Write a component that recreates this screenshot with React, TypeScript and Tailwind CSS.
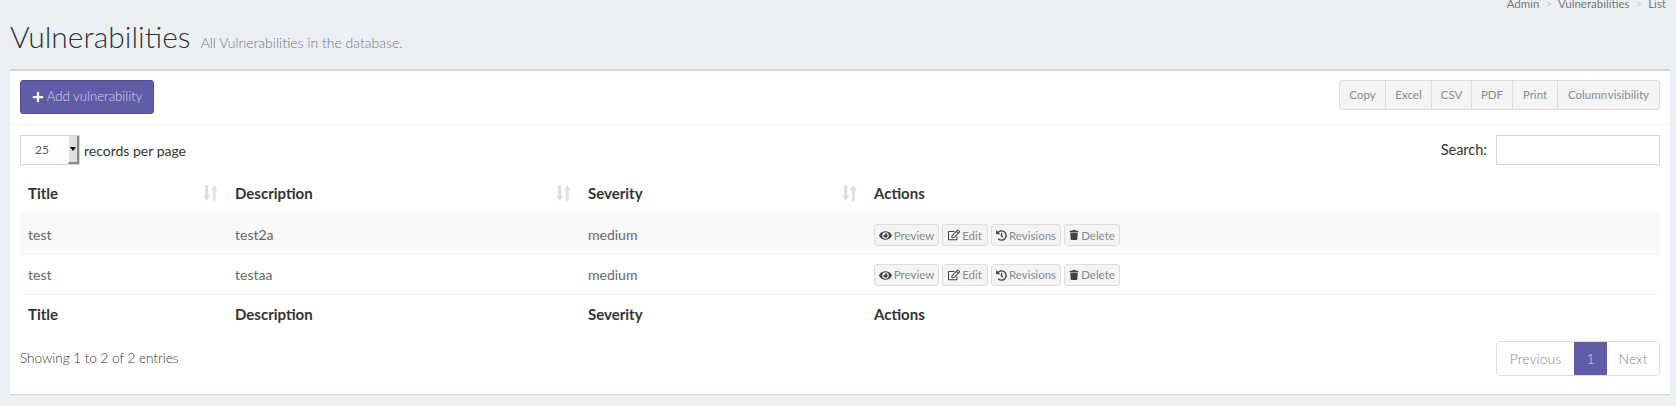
import { FaEye, FaHistory, FaPlus, FaRegEdit, FaTrash } from "react-icons/fa";

const font = "font-['Lato','Noto_Sans',sans-serif]";

function SortIcon() {
  return (
    <svg width="15" height="16" viewBox="0 0 15 16" className="text-[#dcdcdc]">
      <path d="M2.2 0h3v10.5h2.2L3.7 16 0 10.5h2.2z" fill="currentColor" />
      <path d="M9.8 16h3V5.5H15L11.3 0 7.6 5.5h2.2z" fill="currentColor" opacity="0.85" />
    </svg>
  );
}

function ActionButton({ icon, label, className }: { icon: React.ReactNode; label: string; className: string }) {
  return (
    <button className={`flex h-[22px] items-center justify-center gap-[2px] rounded-[3px] border border-[#ddd] bg-[#f4f4f4] text-[11.5px] text-[#8a8a8a] ${className}`}>
      <span className="text-[#444]">{icon}</span>
      {label}
    </button>
  );
}

function Actions() {
  return (
    <div className="flex gap-[3px] pt-[2px]">
      <ActionButton icon={<FaEye size={13} />} label="Preview" className="w-[65px]" />
      <ActionButton icon={<FaRegEdit size={12} />} label="Edit" className="w-[46px]" />
      <ActionButton icon={<FaHistory size={11} />} label="Revisions" className="w-[70px]" />
      <ActionButton icon={<FaTrash size={10} />} label="Delete" className="w-[56px]" />
    </div>
  );
}

const exportButtons = [
  ["Copy", "w-[45px]"],
  ["Excel", "w-[46px]"],
  ["CSV", "w-[40px]"],
  ["PDF", "w-[41px]"],
  ["Print", "w-[45px]"],
  ["Column visibility", "w-[102px]"],
];

const rows = [
  ["test", "test2a", "medium", "bg-[#f9f9f9]"],
  ["test", "testaa", "medium", "bg-white"],
];

export default function App() {
  return (
    <div className={`h-[406px] overflow-hidden bg-[#ecf0f5] px-[10px] ${font}`}>
      {/* Breadcrumb sits hard against the top of the window */}
      <div className="flex h-[8px] justify-end gap-[6px] text-[11.5px] leading-[8px] text-[#777]">
        <span>Admin</span>
        <span className="text-[#ccc]">&gt;</span>
        <span>Vulnerabilities</span>
        <span className="text-[#ccc]">&gt;</span>
        <span>List</span>
      </div>

      {/* Header */}
      <div className="flex h-[61px] items-baseline gap-[10px] pt-[10px]">
        <h1 className="text-[30px] font-light leading-[36px] text-[#333]">Vulnerabilities</h1>
        <span className="text-[14px] font-light text-[#777]">All Vulnerabilities in the database.</span>
      </div>

      {/* Card */}
      <div className="h-[325px] w-[1660px] border-t-2 border-t-[#d2d6de] bg-white shadow-[0_1px_1px_rgba(0,0,0,0.1)]">
        <div className="flex h-[54px] items-start justify-between border-b border-[#f4f4f4] px-[10px] pt-[9px]">
          <button className="flex h-[34px] w-[134px] items-center justify-center gap-[3px] rounded-[3px] border border-[#544f94] bg-[#605ca8] text-[13.25px] font-light text-[#d5d3ee]">
            <FaPlus size={12} className="text-white" />
            Add vulnerability
          </button>
          <div className="flex h-[30px] overflow-hidden rounded-[3px] border border-[#ddd] bg-[#f4f4f4]">
            {exportButtons.map(([label, width], i) => (
              <div
                key={label}
                className={`flex items-center justify-center border-[#ddd] text-[11.5px] text-[#8a8a8a] [word-spacing:-2px] ${width} ${i > 0 ? "border-l" : ""}`}
              >
                {label}
              </div>
            ))}
          </div>
        </div>

        <div className="px-[10px]">
          <div className="flex h-[48px] items-start justify-between pt-[10px]">
            <div className="flex items-center gap-[4px] text-[14px] text-[#333]">
              <div className="flex h-[30px] w-[60px] items-stretch border border-[#d2d6de] bg-white">
                <span className="flex flex-1 items-center pl-[14px] text-[12px] text-[#555]">25</span>
                <span className="flex w-[11px] items-center justify-center border-b-2 border-l border-r-2 border-b-[#888] border-l-white border-r-[#888] bg-[#e0e0e0]">
                  <span className="h-0 w-0 border-x-[3px] border-t-[4px] border-x-transparent border-t-black" />
                </span>
              </div>
              records per page
            </div>
            <div className="flex items-center gap-[9px] text-[14.5px] text-[#333]">
              Search:
              <div className="h-[30px] w-[164px] border border-[#d2d6de] bg-white" />
            </div>
          </div>

          <table className="w-[1640px] table-fixed border-collapse text-[14px]">
            <colgroup>
              <col className="w-[207px]" />
              <col className="w-[353px]" />
              <col className="w-[286px]" />
              <col />
            </colgroup>
            <thead className="border-b-2 border-[#f4f4f4]">
              <tr className="h-[41px] text-left text-[15px] font-bold text-[#333]">
                <th className="px-[8px]">
                  <div className="flex items-center justify-between pr-[1px]">Title<SortIcon /></div>
                </th>
                <th className="px-[8px]">
                  <div className="flex items-center justify-between pr-[1px]">Description<SortIcon /></div>
                </th>
                <th className="px-[8px]">
                  <div className="flex items-center justify-between pr-[1px]">Severity<SortIcon /></div>
                </th>
                <th className="px-[8px]">Actions</th>
              </tr>
            </thead>
            <tbody className="text-[#666]">
              {rows.map(([title, description, severity, bg], i) => (
                <tr key={i} className={`h-[40px] border-b border-[#f4f4f4] ${bg}`}>
                  <td className="px-[8px]">{title}</td>
                  <td className="px-[8px]">{description}</td>
                  <td className="px-[8px]">{severity}</td>
                  <td className="px-[8px]"><Actions /></td>
                </tr>
              ))}
            </tbody>
            <tfoot>
              <tr className="h-[39px] text-left text-[15px] font-bold text-[#333]">
                <th className="px-[8px]">Title</th>
                <th className="px-[8px]">Description</th>
                <th className="px-[8px]">Severity</th>
                <th className="px-[8px]">Actions</th>
              </tr>
            </tfoot>
          </table>

          <div className="mt-[8px] flex items-center justify-between">
            <span className="text-[13.5px] font-light text-[#333]">Showing 1 to 2 of 2 entries</span>
            <div className="flex h-[35px] overflow-hidden rounded-[4px] border border-[#ddd] text-[14px] font-light text-[#888]">
              <span className="flex w-[77px] items-center justify-center bg-white">Previous</span>
              <span className="flex w-[33px] items-center justify-center bg-[#605ca8] text-[#d5d3ee]">1</span>
              <span className="flex w-[52px] items-center justify-center bg-white">Next</span>
            </div>
          </div>
        </div>
      </div>
    </div>
  );
}
